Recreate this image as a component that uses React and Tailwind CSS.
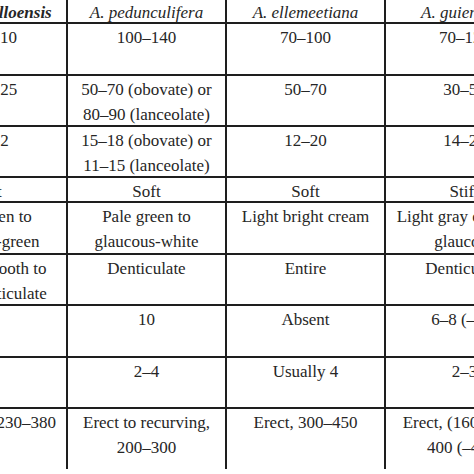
import React from "react";

const rows = [
  {
    h: "h-[25px]",
    head: true,
    cells: ["A. kavandilloensis", "A. pedunculifera", "A. ellemeetiana", "A. guiengola"],
  },
  { h: "h-[52px]", cells: ["100–110", "100–140", "70–100", "70–120"] },
  {
    h: "h-[51px]",
    cells: ["100–125", ["50–70 (obovate) or", "80–90 (lanceolate)"], "50–70", "30–50"],
  },
  {
    h: "h-[51px]",
    cells: ["10–12", ["15–18 (obovate) or", "11–15 (lanceolate)"], "12–20", "14–20"],
  },
  { h: "h-[25px]", cells: ["Soft", "Soft", "Soft", "Stiff"] },
  {
    h: "h-[52px]",
    cells: [
      ["Pale green to", "glaucous-green"],
      ["Pale green to", "glaucous-white"],
      "Light bright cream",
      ["Light gray or bluish", "glaucous"],
    ],
  },
  {
    h: "h-[51px]",
    cells: [["Nearly smooth to", "finely denticulate"], "Denticulate", "Entire", "Denticulate"],
  },
  { h: "h-[52px]", cells: ["8", "10", "Absent", "6–8 (–10)"] },
  { h: "h-[51px]", cells: ["3", "2–4", "Usually 4", "2–3"] },
  {
    h: "h-[60px]",
    last: true,
    cells: [
      "Spreading, 230–380",
      ["Erect to recurving,", "200–300"],
      "Erect, 300–450",
      ["Erect, (160–)200–", "400 (–450)"],
    ],
  },
];

const Cell = ({ value, head, first }) => {
  const lines = Array.isArray(value) ? value : [value];
  return (
    <div
      className={
        "w-[159px] shrink-0 border-l-2 border-[#1e1e1e] pt-[1px] text-center " +
        (head ? "italic " : "") +
        (head && first ? "font-bold" : "")
      }
    >
      {lines.map((l, i) => (
        <div key={i} className="whitespace-nowrap">
          {l}
        </div>
      ))}
    </div>
  );
};

export default function App() {
  return (
    <div className="w-[474px] h-[474px] overflow-hidden bg-white">
      <div
        className="ml-[-93px] mt-[-3px] w-[640px] border-t-2 border-[#1e1e1e] text-[17px] leading-[25px] text-[#262626]"
        style={{ fontFamily: '"Liberation Serif", "Times New Roman", serif' }}
      >
        {rows.map((r, i) => (
          <div
            key={i}
            className={
              "flex " + r.h + (r.last ? "" : " border-b-2 border-[#1e1e1e]")
            }
          >
            {r.cells.map((c, j) => (
              <Cell key={j} value={c} head={r.head} first={j === 0} />
            ))}
          </div>
        ))}
      </div>
    </div>
  );
}
